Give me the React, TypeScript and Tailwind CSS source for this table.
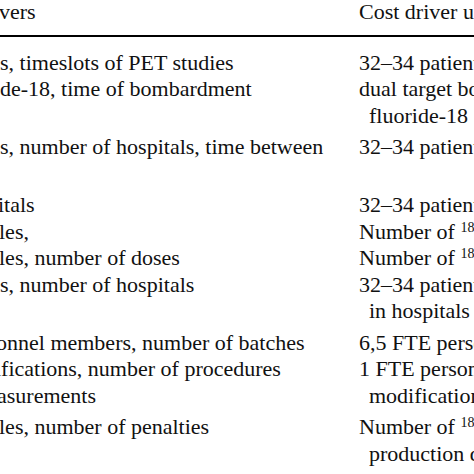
import type { ReactNode } from "react";

type Line = { text: ReactNode; shift?: string };
type Row = { left: Line[]; right: ReactNode[]; extra?: boolean };

const rows: Row[] = [
  {
    left: [{ text: "s, timeslots of PET studies" }],
    right: ["32–34 patients per day"],
  },
  {
    left: [{ text: "de-18, time of bombardment" }],
    right: ["dual target bombardment of", "fluoride-18"],
    extra: true,
  },
  {
    left: [{ text: "s, number of hospitals, time between" }, { text: "" }],
    right: ["32–34 patients per day"],
    extra: true,
  },
  {
    left: [{ text: "itals", shift: "-ml-[2px]" }],
    right: ["32–34 patients per day"],
  },
  {
    left: [{ text: "les,", shift: "-ml-[1px]" }],
    right: [
      <>
        Number of <sup className="text-[14px]">18</sup>F-FDG doses
      </>,
    ],
  },
  {
    left: [{ text: "les, number of doses", shift: "-ml-[1px]" }],
    right: [
      <>
        Number of <sup className="text-[14px]">18</sup>F-FDG doses
      </>,
    ],
  },
  {
    left: [{ text: "s, number of hospitals" }],
    right: ["32–34 patients per day", "in hospitals"],
    extra: true,
  },
  {
    left: [{ text: "onnel members, number of batches", shift: "-ml-[4px]" }],
    right: ["6,5 FTE personnel"],
  },
  {
    left: [
      { text: "ifications, number of procedures", shift: "-ml-[5px]" },
      { text: "asurements", shift: "-ml-[3px]" },
    ],
    right: ["1 FTE personnel for", "modifications"],
    extra: true,
  },
  {
    left: [{ text: "les, number of penalties", shift: "-ml-[1px]" }],
    right: [
      <>
        Number of <sup className="text-[14px]">18</sup>F-FDG doses
      </>,
      "production days",
    ],
  },
];

export default function App() {
  return (
    <div className="w-[474px] h-[474px] overflow-hidden bg-white text-[#111111] font-['Liberation_Serif',serif] text-[22px] leading-[26.5px]">
      <div className="-mt-[1px] whitespace-nowrap">
        {/* header */}
        <div className="grid grid-cols-[359px_1fr] pb-[9px] border-b-2 border-black">
          <div className="-ml-[1px]">vers</div>
          <div>Cost driver use</div>
        </div>

        {/* body */}
        <div className="pt-[13px]">
          {rows.map((row, i) => (
            <div
              key={i}
              className={`grid grid-cols-[359px_1fr] ${row.extra ? "pb-[5px]" : ""}`}
            >
              <div>
                {row.left.map((l, j) => (
                  <div key={j} className={`h-[26.5px] ${l.shift ?? ""}`}>
                    {l.text}
                  </div>
                ))}
              </div>
              <div>
                {row.right.map((r, j) => (
                  <div key={j} className={`h-[26.5px] ${j > 0 ? "pl-[10px]" : ""}`}>
                    {r}
                  </div>
                ))}
              </div>
            </div>
          ))}
        </div>
      </div>
    </div>
  );
}
